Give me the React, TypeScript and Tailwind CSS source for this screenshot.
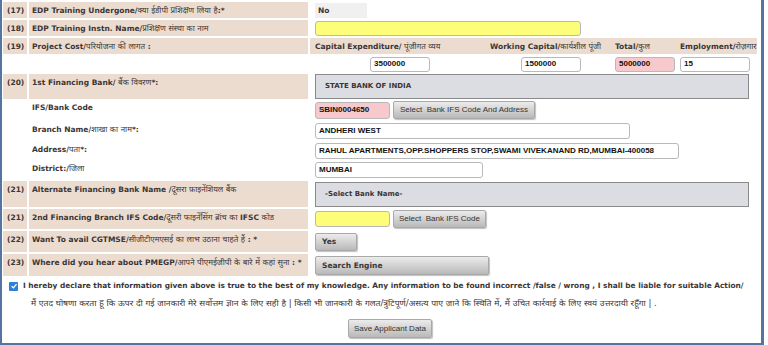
import React from 'react';

const beige = 'bg-[#ecdcd0]';
const labelFont = "font-['DejaVu_Sans','Noto_Sans',sans-serif] text-[7.5px] leading-[11px] font-bold text-[#3b3535]";
const inputFont = "font-['Liberation_Sans',Arial,sans-serif] text-[8px] font-bold text-[#111]";
const btnFont = "font-['Liberation_Sans',Arial,sans-serif] text-[8px] font-normal text-[#333]";

// hindi parts of the labels are set lighter, as on the form
function Mixed({ text }: { text: string }) {
  const parts = text.split(/([\u0900-\u097F][\u0900-\u097F\s]*[\u0900-\u097F]|[\u0900-\u097F])/);
  return (
    <>
      {parts.map((p, i) =>
        /[\u0900-\u097F]/.test(p) ? (
          <span key={i} className="text-[8px] font-normal">
            {p}
          </span>
        ) : (
          <React.Fragment key={i}>{p}</React.Fragment>
        ),
      )}
    </>
  );
}

function Row({
  num,
  label,
  h,
  shaded = true,
  children,
}: {
  num?: string;
  label: string;
  h: string;
  shaded?: boolean;
  children?: React.ReactNode;
}) {
  return (
    <div className={`flex gap-[2px] ${h}`}>
      <div className={`w-[24px] shrink-0 pl-[4px] pt-[3px] ${shaded ? beige : ''} ${labelFont}`}>{num}</div>
      <div className={`w-[279px] shrink-0 whitespace-nowrap pl-[3px] pt-[3px] ${shaded ? beige : ''} ${labelFont}`}>
        <Mixed text={label} />
      </div>
      <div className="flex flex-1 items-center gap-[3px] pl-[5px]">{children}</div>
    </div>
  );
}

function TextBox({
  value,
  w,
  h = 'h-[17px]',
  tone = 'white',
}: {
  value?: string;
  w: string;
  h?: string;
  tone?: 'white' | 'pink' | 'yellow';
}) {
  const bg = tone === 'pink' ? 'bg-[#f7c9cc]' : tone === 'yellow' ? 'bg-[#fdfd7a]' : 'bg-white';
  return (
    <div className={`${w} ${h} flex items-center rounded-[3px] border border-[#b9b9b9] ${bg} pl-[3px] ${inputFont}`}>
      {value}
    </div>
  );
}

function GrayBtn({ children, w, h = 'h-[18px]', bold = false }: { children: React.ReactNode; w: string; h?: string; bold?: boolean }) {
  return (
    <div
      className={`${w} ${h} flex items-center rounded-[2px] border border-[#a9a9a9] bg-gradient-to-b from-[#ececec] to-[#b9b9b9] shadow-[1px_1px_1px_rgba(0,0,0,0.25)] ${
        bold ? `pl-[6px] ${labelFont}` : `justify-center ${btnFont}`
      }`}
    >
      {children}
    </div>
  );
}

function SelectBox({ value }: { value: string }) {
  return (
    <div className={`flex h-[25px] w-[434px] items-center border border-[#8a8a8a] bg-[#dcdde3] pl-[9px] ${labelFont} text-[7px]`}>
      {value}
    </div>
  );
}

export default function App() {
  return (
    <div className="h-[345px] w-[768px] overflow-hidden bg-white">
      <div className="flex h-[345px] w-[764px] flex-col border-b-2 border-l-2 border-r-[3px] border-[#5575a0] pl-[1px] pr-[8px] pt-[2px]">
        <div className="flex flex-col gap-[2px]">
          <Row num="(17)" label="EDP Training Undergone/क्या ईडीपी प्रशिक्षण लिया है:*" h="h-[16px]">
            <div className={`flex h-[15px] w-[52px] items-center bg-[#f0f0f0] pl-[3px] ${labelFont}`}>No</div>
          </Row>
          <Row num="(18)" label="EDP Training Instn. Name/प्रशिक्षण संस्था का नाम" h="h-[16px]">
            <TextBox w="w-[266px]" h="h-[15px]" tone="yellow" />
          </Row>
          <div className="flex h-[16px] gap-[2px]">
            <div className={`w-[24px] shrink-0 pl-[4px] pt-[3px] ${beige} ${labelFont}`}>(19)</div>
            <div className={`w-[279px] shrink-0 pl-[3px] pt-[3px] ${beige} ${labelFont}`}>
              <Mixed text="Project Cost/परियोजना की लागत :" />
            </div>
            <div className={`flex flex-1 whitespace-nowrap pt-[3px] ${beige} ${labelFont}`}>
              <div className="w-[180px] pl-[5px]">
                <Mixed text="Capital Expenditure/ पूंजीगत व्यय" />
              </div>
              <div className="w-[122px]">
                <Mixed text="Working Capital/कार्यशील पूंजी" />
              </div>
              <div className="w-[66px] pl-[3px]">
                <Mixed text="Total/कुल" />
              </div>
              <div className="flex-1 pl-[2px]">
                <Mixed text="Employment/रोज़गार" />
              </div>
            </div>
          </div>
          <div className="flex h-[16px] gap-[2px]">
            <div className="w-[305px] shrink-0" />
            <div className="flex flex-1 items-center">
              <div className="flex w-[180px] justify-center">
                <TextBox w="w-[60px]" h="h-[15px]" value="3500000" />
              </div>
              <div className="flex w-[122px] justify-center">
                <TextBox w="w-[60px]" h="h-[15px]" value="1500000" />
              </div>
              <div className="flex w-[66px] justify-center">
                <TextBox w="w-[60px]" h="h-[15px]" value="5000000" tone="pink" />
              </div>
              <div className="flex-1 pl-[2px]">
                <TextBox w="w-[70px]" h="h-[15px]" value="15" />
              </div>
            </div>
          </div>
          <Row num="(20)" label="1st Financing Bank/ बैंक विवरण*:" h="h-[25px]">
            <SelectBox value="STATE BANK OF INDIA" />
          </Row>
        </div>
        <div className="flex flex-col">
          <Row label="IFS/Bank Code" h="h-[22px]" shaded={false}>
            <TextBox w="w-[75px]" value="SBIN0004650" tone="pink" />
            <GrayBtn w="w-[142px]">Select&nbsp; Bank IFS Code And Address</GrayBtn>
          </Row>
          <Row label="Branch Name/शाखा का नाम*:" h="h-[20px]" shaded={false}>
            <TextBox w="w-[315px]" h="h-[16px]" value="ANDHERI WEST" />
          </Row>
          <Row label="Address/पता*:" h="h-[19px]" shaded={false}>
            <TextBox w="w-[364px]" h="h-[16px]" value="RAHUL APARTMENTS,OPP.SHOPPERS STOP,SWAMI VIVEKANAND RD,MUMBAI-400058" />
          </Row>
          <Row label="District:/जिला" h="h-[20px]" shaded={false}>
            <TextBox w="w-[168px]" h="h-[16px]" value="MUMBAI" />
          </Row>
        </div>
        <div className="mt-[1px] flex flex-col gap-[2px]">
          <Row num="(21)" label="Alternate Financing Bank Name /दूसरा फ़ाइनेंशियल बैंक" h="h-[26px]">
            <SelectBox value="-Select Bank Name-" />
          </Row>
          <Row num="(21)" label="2nd Financing Branch IFS Code/दूसरी फाइनेंसिंग ब्रांच का IFSC कोड" h="h-[20px]">
            <TextBox w="w-[75px]" h="h-[16px]" tone="yellow" />
            <GrayBtn w="w-[93px]">Select&nbsp; Bank IFS Code</GrayBtn>
          </Row>
          <Row num="(22)" label="Want To avail CGTMSE/सीजीटीएमएसई का लाभ उठाना चाहते हैं : *" h="h-[21px]">
            <GrayBtn w="w-[42px]" h="h-[18px]" bold>
              Yes
            </GrayBtn>
          </Row>
          <Row num="(23)" label="Where did you hear about PMEGP/आपने पीएमईजीपी के बारे में कहां सुना : *" h="h-[22px]">
            <GrayBtn w="w-[174px]" h="h-[19px]" bold>
              Search Engine
            </GrayBtn>
          </Row>
        </div>
        <div className={`mt-[3px] ${labelFont}`}>
          <div className="flex items-center gap-[5px] whitespace-nowrap pl-[6px]">
            <span className="flex h-[9px] w-[9px] items-center justify-center rounded-[1px] bg-[#2f7fd6]">
              <svg viewBox="0 0 10 10" className="h-[8px] w-[8px]">
                <path d="M2 5.2 L4.2 7.4 L8.2 2.6" fill="none" stroke="white" strokeWidth="1.6" />
              </svg>
            </span>
            <span className="text-[7.4px] leading-[14px]">
              I hereby declare that information given above is true to the best of my knowledge. Any information to be found incorrect /false / wrong , I shall be liable for suitable Action/
            </span>
          </div>
          <div className="whitespace-nowrap pl-[28px] pt-[3px] text-[8.6px] font-normal leading-[14px]">
            मैं एतद घोषणा करता हू कि ऊपर दी गई जानकारी मेरे सर्वोत्तम ज्ञान के लिए सही है | किसी भी जानकारी के गलत/त्रुटिपूर्ण/असत्य पाए जाने कि स्थिति में, मैं उचित कार्रवाई के लिए स्वयं उत्तरदायी रहूँगा | .
          </div>
          <div className="flex justify-center pl-[24px] pt-[9px]">
            <GrayBtn w="w-[84px]" h="h-[19px]">
              Save Applicant Data
            </GrayBtn>
          </div>
        </div>
      </div>
    </div>
  );
}
